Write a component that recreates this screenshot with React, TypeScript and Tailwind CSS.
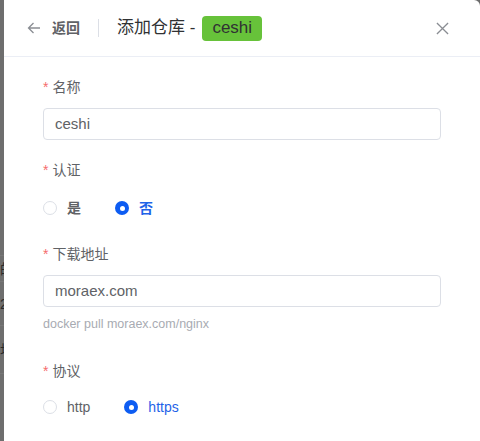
import React from 'react';

const font = { fontFamily: '"Liberation Sans", "Noto Sans CJK SC", sans-serif' };

function Label({ text }: { text: string }) {
    return (
        <div className="flex h-[22px] items-center text-[14px] leading-[22px] text-[#606266]">
            <span className="mr-[4px] text-[#f56c6c]">*</span>
            {text}
        </div>
    );
}

function Radio({ label, checked, bold }: { label: string; checked?: boolean; bold?: boolean }) {
    return (
        <div className="flex items-center">
            {checked ? (
                <span className="flex h-[14px] w-[14px] items-center justify-center rounded-full bg-[#0d5cf2]">
                    <span className="h-[5px] w-[5px] rounded-full bg-white" />
                </span>
            ) : (
                <span className="h-[14px] w-[14px] rounded-full border border-[#dcdfe6] bg-white" />
            )}
            <span
                className={`ml-[10px] text-[14px] ${bold ? 'font-bold' : ''} ${checked ? 'text-[#1f63e8]' : 'text-[#606266]'}`}
            >
                {label}
            </span>
        </div>
    );
}

export default function App() {
    return (
        <div className="flex h-[441px] w-[480px] bg-[#6b6b6b]" style={font}>
            {/* page behind the drawer */}
            <div className="flex w-[4px] flex-col overflow-hidden bg-[#6e6e6e]">
                <div className="h-[255px]" />
                <div className="h-[26px] border-t border-[#777] text-[14px] leading-[26px] text-[#2a2a2a]">的</div>
                <div className="h-[44px] border-t border-[#777] text-[14px] leading-[44px] text-[#2a2a2a]">2</div>
                <div className="h-[48px] border-t border-[#777] text-[14px] leading-[48px] text-[#2a2a2a]">址</div>
                <div className="flex-1 border-t border-[#777]" />
            </div>

            <div className="flex flex-1 flex-col rounded-tr-[6px] bg-white">
                <div className="flex h-[57px] items-center border-b border-[#ebeef5] pl-[23px] pr-[31px]">
                    <svg width="14" height="14" viewBox="0 0 14 14" fill="none" stroke="#8a8d93" strokeWidth="1.3">
                        <path d="M13 7H1.5M6.5 2L1.5 7l5 5" />
                    </svg>
                    <span className="ml-[11px] text-[14px] font-bold text-[#606266]">返回</span>
                    <span className="ml-[18px] h-[18px] w-px bg-[#dcdfe6]" />
                    <span className="ml-[18px] text-[17px] text-[#303133]">添加仓库 -</span>
                    <span className="ml-[7px] flex h-[25px] items-center rounded-[4px] bg-[#67c23a] px-[10px] text-[17px] text-[#303133]">
                        ceshi
                    </span>
                    <span className="flex-1" />
                    <svg width="13" height="13" viewBox="0 0 14 14" stroke="#8a8d93" strokeWidth="1.4">
                        <path d="M1 1l12 12M13 1L1 13" />
                    </svg>
                </div>

                <div className="flex flex-col px-[39px] pt-[19px]">
                    <Label text="名称" />
                    <div className="mt-[10px] flex h-[32px] items-center rounded-[4px] border border-[#dcdfe6] px-[11px] text-[15px] text-[#606266]">
                        ceshi
                    </div>

                    <div className="mt-[19px]">
                        <Label text="认证" />
                    </div>
                    <div className="mt-[11px] flex h-[32px] items-center gap-[34px]">
                        <Radio label="是" bold />
                        <Radio label="否" checked bold />
                    </div>

                    <div className="mt-[19px]">
                        <Label text="下载地址" />
                    </div>
                    <div className="mt-[10px] flex h-[32px] items-center rounded-[4px] border border-[#dcdfe6] px-[11px] text-[15px] text-[#606266]">
                        moraex.com
                    </div>
                    <div className="mt-[7px] h-[20px] text-[12.5px] leading-[20px] text-[#a8abb2]">
                        docker pull moraex.com/nginx
                    </div>

                    <div className="mt-[26px]">
                        <Label text="协议" />
                    </div>
                    <div className="mt-[9px] flex h-[32px] items-center gap-[34px]">
                        <Radio label="http" />
                        <Radio label="https" checked />
                    </div>
                </div>
            </div>
        </div>
    );
}
